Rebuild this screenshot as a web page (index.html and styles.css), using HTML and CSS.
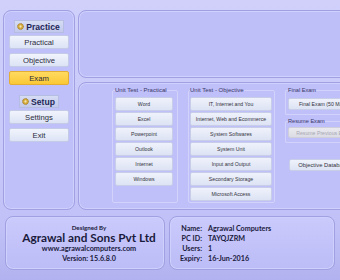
FILE: index.html
```html
<!DOCTYPE html>
<html>
<head>
<meta charset="utf-8">
<link rel="stylesheet" href="styles.css">
</head>
<body>
<div class="window">
  <div class="top">
    <aside class="panel sidebar">
      <div class="section-label"><svg class="gear" viewBox="0 0 8 8" width="7" height="7"><circle cx="4" cy="4" r="3.4" fill="#d4a838" stroke="#8c6a18" stroke-width="0.8" stroke-dasharray="1.2 0.6"/><circle cx="4" cy="4" r="1.3" fill="#f4e6b0"/></svg>Practice</div>
      <button class="btn first">Practical</button>
      <button class="btn">Objective</button>
      <button class="btn active">Exam</button>
      <div class="section-label setup"><svg class="gear" viewBox="0 0 8 8" width="7" height="7"><circle cx="4" cy="4" r="3.4" fill="#d4a838" stroke="#8c6a18" stroke-width="0.8" stroke-dasharray="1.2 0.6"/><circle cx="4" cy="4" r="1.3" fill="#f4e6b0"/></svg>Setup</div>
      <button class="btn first">Settings</button>
      <button class="btn">Exit</button>
    </aside>
    <div class="main">
      <div class="panel banner"></div>
      <div class="panel content">
        <fieldset class="group g-practical">
          <legend>Unit Test - Practical</legend>
          <button class="sbtn">Word</button>
          <button class="sbtn">Excel</button>
          <button class="sbtn">Powerpoint</button>
          <button class="sbtn">Outlook</button>
          <button class="sbtn">Internet</button>
          <button class="sbtn">Windows</button>
        </fieldset>
        <fieldset class="group g-objective">
          <legend>Unit Test - Objective</legend>
          <button class="sbtn">IT, Internet and You</button>
          <button class="sbtn">Internet, Web and Ecommerce</button>
          <button class="sbtn">System Softwares</button>
          <button class="sbtn">System Unit</button>
          <button class="sbtn">Input and Output</button>
          <button class="sbtn">Secondary Storage</button>
          <button class="sbtn">Microsoft Access</button>
        </fieldset>
        <div class="exam-col">
          <fieldset class="group g-final">
            <legend>Final Exam</legend>
            <button class="sbtn final">Final Exam (50 Marks)</button>
          </fieldset>
          <fieldset class="group g-resume">
            <legend>Resume Exam</legend>
            <button class="sbtn resume" disabled>Resume Previous Exam</button>
          </fieldset>
          <button class="sbtn database">Objective Database</button>
        </div>
      </div>
    </div>
  </div>
  <div class="bottom">
    <div class="panel lower credits">
      <div class="designed">Designed By</div>
      <div class="company">Agrawal and Sons Pvt Ltd</div>
      <div class="site">www.agrawalcomputers.com</div>
      <div class="version">Version: 15.6.8.0</div>
    </div>
    <div class="panel lower license">
      <div class="row"><span class="key">Name:</span><span class="val">Agrawal Computers</span></div>
      <div class="row"><span class="key">PC ID:</span><span class="val">TAYQJZRM</span></div>
      <div class="row"><span class="key">Users:</span><span class="val">1</span></div>
      <div class="row"><span class="key">Expiry:</span><span class="val">16-Jun-2016</span></div>
    </div>
  </div>
</div>
</body>
</html>
```

FILE: styles.css
```css
* { box-sizing: border-box; }

html, body {
  margin: 0;
  width: 340px;
  height: 280px;
  overflow: hidden;
}

body {
  background: linear-gradient(#d0d0fb 0px, #c8c8fa 150px, #c0c0f7 230px, #b2b2f0 280px);
  font-family: "Liberation Sans", Arial, sans-serif;
}

.window {
  display: flex;
  flex-direction: column;
  padding: 10px 0 0 3px;
}

.top {
  display: flex;
  gap: 3px;
  height: 200px;
}

.panel {
  border: 1px solid #a0a0e2;
  border-radius: 8px;
  background: #bfbff9;
  box-shadow: inset 0 0 0 1px #d0d0fd;
}

/* Sidebar */
.sidebar {
  width: 72px;
  flex: none;
  display: flex;
  flex-direction: column;
  align-items: center;
  padding-top: 9px;
}

.section-label {
  display: flex;
  align-items: center;
  gap: 2px;
  height: 13px;
  padding: 0 3px 0 2px;
  background: linear-gradient(#d6dcf4, #c2c9ec);
  border: 1px solid #b6bde2;
  font-weight: bold;
  font-size: 8.6px;
  color: #1e2656;
}

.section-label.setup { margin-top: 10px; }

.gear { flex: none; }

.btn {
  display: block;
  width: 60px;
  height: 14px;
  margin: 4px 0 0;
  padding: 0;
  border: 1px solid #c4cbe6;
  border-radius: 2px;
  background: linear-gradient(#f1f4fc, #dce3f5);
  font-family: "Liberation Sans", Arial, sans-serif;
  font-size: 7.7px;
  color: #2c2c3c;
}

.btn.first { margin-top: 2px; }

.btn.active {
  background: linear-gradient(#ffda60, #fbc836);
  border-color: #e4ae34;
}

/* Main */
.main {
  width: 300px;
  flex: none;
  display: flex;
  flex-direction: column;
  gap: 4px;
}

.banner {
  height: 68px;
  flex: none;
  background: #bebef9;
}

.content {
  flex: 1;
  display: flex;
  align-items: flex-start;
  gap: 10px;
  padding: 4px 0 0 33px;
}

.group {
  margin: 0;
  min-width: 0;
  border: 1px solid #d2d2fb;
  border-radius: 2px;
  padding: 3px 3px 0 2px;
}

.group legend {
  padding: 0;
  font-size: 6px;
  line-height: 7px;
  color: #3a3a68;
}

.g-practical {
  width: 66px;
  height: 116px;
}

.g-objective {
  width: 87px;
  height: 116px;
  padding-left: 1px;
}

.sbtn {
  display: block;
  width: 58px;
  height: 14px;
  margin: 0 0 1px;
  padding: 0;
  border: 1px solid #c8cee8;
  border-radius: 2px;
  background: linear-gradient(#eff2fb, #dde3f4);
  font-family: "Liberation Sans", Arial, sans-serif;
  font-size: 5.2px;
  color: #333340;
  white-space: nowrap;
}

.g-objective .sbtn { width: 82px; }

.exam-col {
  display: flex;
  flex-direction: column;
  align-items: flex-start;
  width: 90px;
  flex: none;
}

.g-final, .g-resume {
  width: 90px;
  padding: 4px 0 3px 2px;
  border-right: none;
}

.g-final legend, .g-resume legend {
  font-size: 5.6px;
}

.g-resume {
  margin-top: 3px;
  padding-top: 2px;
}

.sbtn.final {
  width: 74px;
  height: 12px;
}

.sbtn.resume {
  width: 72px;
  height: 11px;
  background: linear-gradient(#e9e9ef, #dcdce4);
  border-color: #cfcfdc;
  color: #a8a8b4;
}

.sbtn.database {
  width: 69px;
  height: 12px;
  margin-top: 16px;
  margin-left: 4px;
  font-size: 5.8px;
}

/* Bottom */
.bottom {
  display: flex;
  gap: 4px;
  margin-top: 6px;
  padding-left: 2px;
  height: 54px;
}

.lower {
  background: linear-gradient(#cacafc, #bcbcf7);
  font-family: Lato, "Liberation Sans", sans-serif;
  font-weight: bold;
  color: #1a1a3c;
}

.credits {
  width: 160px;
  flex: none;
  display: flex;
  flex-direction: column;
  align-items: center;
  padding: 7px 0 0 8px;
}

.designed { font-size: 6.2px; line-height: 8px; }
.company { font-size: 11.8px; line-height: 12px; }
.site { font-size: 7.3px; line-height: 10px; }
.version { font-size: 7.2px; line-height: 9px; }

.license {
  width: 166px;
  flex: none;
  padding: 7px 0 0 0;
  font-size: 7.2px;
}

.row {
  display: flex;
  gap: 6px;
  height: 10px;
  line-height: 10px;
}

.key {
  width: 32px;
  text-align: right;
}
```
